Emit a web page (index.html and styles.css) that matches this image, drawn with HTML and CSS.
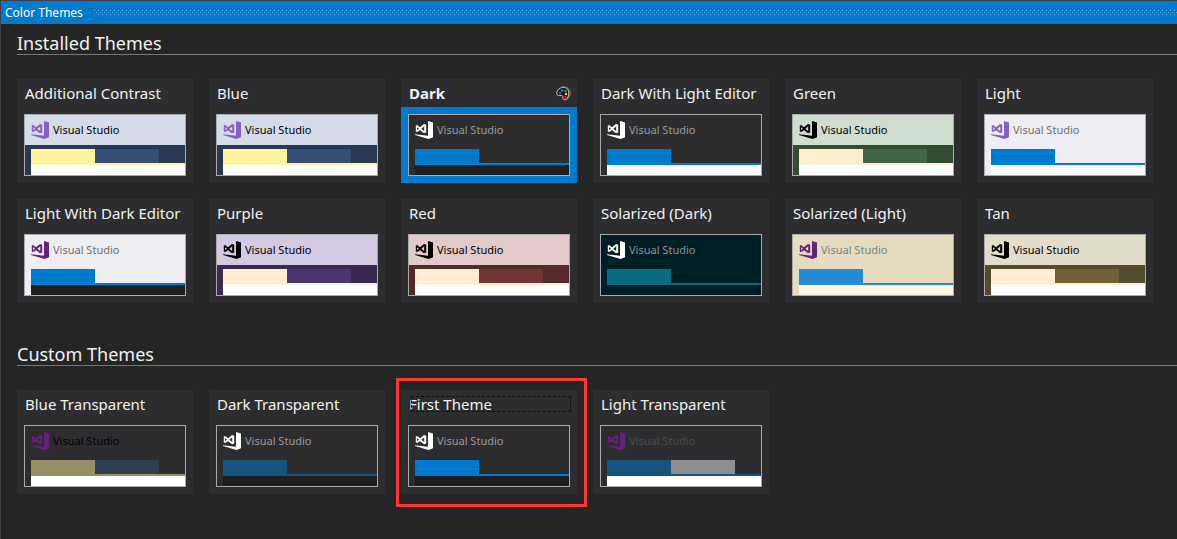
FILE: index.html
```html
<!DOCTYPE html>
<html lang="en">
<head>
  <meta charset="UTF-8" />
  <title>Color Themes</title>
  <link rel="stylesheet" href="styles.css">
</head>
<body>
  <!-- Shared icons -->
  <svg class="defs" aria-hidden="true">
    <symbol id="vs" viewBox="0 0 18 18">
      <path d="M13 0 18 1.500v14.700L13.500 18 0 14v-.8l13 1.600z"/>
      <path fill-rule="evenodd" d="M.8 4.500 2 4 5 6.200 9 3l2.200.8v7.700L9 12.300 5 9.200 2 11 .8 10.500zM2.200 6v3.200L4 7.700zM9.200 5.500 6.300 7.700 9.200 10z"/>
    </symbol>
  </svg>

  <header class="titlebar">
    <h1>Color Themes</h1>
    <span class="grip"></span>
  </header>

  <main>
    <!-- Installed -->
    <section>
      <h2>Installed Themes</h2>
      <div class="grid">
        <button class="card blue">
          <span class="name">Additional Contrast</span>
          <span class="body"><span class="preview">
            <span class="top"><svg class="logo"><use href="#vs"/></svg>Visual Studio</span>
            <span class="tabs"><i></i><i></i></span><span class="editor"></span>
          </span></span>
        </button>
        <button class="card blue">
          <span class="name">Blue</span>
          <span class="body"><span class="preview">
            <span class="top"><svg class="logo"><use href="#vs"/></svg>Visual Studio</span>
            <span class="tabs"><i></i><i></i></span><span class="editor"></span>
          </span></span>
        </button>
        <button class="card dark selected">
          <span class="name">Dark
            <svg class="palette" viewBox="0 0 15 15">
              <path d="M4 2.200C8 .2 12.400 1.500 12.700 6.500c.2 3.200-.8 5.800-2.700 7.100-2 .6-3.300-.3-3.200-2 .1-1.500-.5-2.300-1.700-2.200C3.500 9.800 1.300 10 .8 7.800.4 5.300 2 3.200 4 2.200z" fill="#1e1e1e" stroke="#c8c8c8"/>
              <path d="M6 .7c5-.3 8.300 2.500 8.200 6.500-.1 2.500-1.200 4.700-3.200 6" fill="none" stroke="#8c8c8c"/>
              <path d="M3 6h2v2H3z" fill="#3b57d0"/>
              <path d="M5 3.500h2v2H5z" fill="#1ba1e2"/>
              <path d="M8.500 4h2v2h-2z" fill="#2fae4a"/>
              <path d="M9 7h2v2H9z" fill="#ffd21f"/>
              <path d="M8 10h2.500v2.500H8z" fill="#e51400"/>
            </svg>
          </span>
          <span class="body"><span class="preview">
            <span class="top"><svg class="logo"><use href="#vs"/></svg>Visual Studio</span>
            <span class="tabs"><i></i><i></i></span><span class="editor"></span>
          </span></span>
        </button>
        <button class="card dark light-editor">
          <span class="name">Dark With Light Editor</span>
          <span class="body"><span class="preview">
            <span class="top"><svg class="logo"><use href="#vs"/></svg>Visual Studio</span>
            <span class="tabs"><i></i><i></i></span><span class="editor"></span>
          </span></span>
        </button>
        <button class="card green">
          <span class="name">Green</span>
          <span class="body"><span class="preview">
            <span class="top"><svg class="logo"><use href="#vs"/></svg>Visual Studio</span>
            <span class="tabs"><i></i><i></i></span><span class="editor"></span>
          </span></span>
        </button>
        <button class="card light">
          <span class="name">Light</span>
          <span class="body"><span class="preview">
            <span class="top"><svg class="logo"><use href="#vs"/></svg>Visual Studio</span>
            <span class="tabs"><i></i><i></i></span><span class="editor"></span>
          </span></span>
        </button>
        <button class="card light dark-editor">
          <span class="name">Light With Dark Editor</span>
          <span class="body"><span class="preview">
            <span class="top"><svg class="logo"><use href="#vs"/></svg>Visual Studio</span>
            <span class="tabs"><i></i><i></i></span><span class="editor"></span>
          </span></span>
        </button>
        <button class="card purple">
          <span class="name">Purple</span>
          <span class="body"><span class="preview">
            <span class="top"><svg class="logo"><use href="#vs"/></svg>Visual Studio</span>
            <span class="tabs"><i></i><i></i></span><span class="editor"></span>
          </span></span>
        </button>
        <button class="card red">
          <span class="name">Red</span>
          <span class="body"><span class="preview">
            <span class="top"><svg class="logo"><use href="#vs"/></svg>Visual Studio</span>
            <span class="tabs"><i></i><i></i></span><span class="editor"></span>
          </span></span>
        </button>
        <button class="card sol-dark">
          <span class="name">Solarized (Dark)</span>
          <span class="body"><span class="preview">
            <span class="top"><svg class="logo"><use href="#vs"/></svg>Visual Studio</span>
            <span class="tabs"><i></i><i></i></span><span class="editor"></span>
          </span></span>
        </button>
        <button class="card sol-light">
          <span class="name">Solarized (Light)</span>
          <span class="body"><span class="preview">
            <span class="top"><svg class="logo"><use href="#vs"/></svg>Visual Studio</span>
            <span class="tabs"><i></i><i></i></span><span class="editor"></span>
          </span></span>
        </button>
        <button class="card tan">
          <span class="name">Tan</span>
          <span class="body"><span class="preview">
            <span class="top"><svg class="logo"><use href="#vs"/></svg>Visual Studio</span>
            <span class="tabs"><i></i><i></i></span><span class="editor"></span>
          </span></span>
        </button>
      </div>
    </section>

    <!-- Custom -->
    <section>
      <h2>Custom Themes</h2>
      <div class="grid">
        <button class="card blue-trans">
          <span class="name">Blue Transparent</span>
          <span class="body"><span class="preview">
            <span class="top"><svg class="logo"><use href="#vs"/></svg>Visual Studio</span>
            <span class="tabs"><i></i><i></i></span><span class="editor"></span>
          </span></span>
        </button>
        <button class="card dark dark-trans">
          <span class="name">Dark Transparent</span>
          <span class="body"><span class="preview">
            <span class="top"><svg class="logo"><use href="#vs"/></svg>Visual Studio</span>
            <span class="tabs"><i></i><i></i></span><span class="editor"></span>
          </span></span>
        </button>
        <button class="card dark marked">
          <span class="name">First Theme</span>
          <span class="body"><span class="preview">
            <span class="top"><svg class="logo"><use href="#vs"/></svg>Visual Studio</span>
            <span class="tabs"><i></i><i></i></span><span class="editor"></span>
          </span></span>
        </button>
        <button class="card light-trans">
          <span class="name">Light Transparent</span>
          <span class="body"><span class="preview">
            <span class="top"><svg class="logo"><use href="#vs"/></svg>Visual Studio</span>
            <span class="tabs"><i></i><i></i></span><span class="editor"></span>
          </span></span>
        </button>
      </div>
    </section>
  </main>
</body>
</html>
```
FILE: styles.css
```css
*, *::before, *::after {box-sizing:border-box;}
body         {margin:0; min-height:100vh; background:#252526; color:#f1f1f1; font-family:"Noto Sans", "Open Sans", sans-serif; border-top:1px solid #3f3f46; border-left:1px solid #3f3f46;}
.defs        {display:none;}

/* Title bar */
.titlebar    {display:flex; align-items:center; gap:11px; height:23px; padding-left:4px; background:#007acc; color:#fff;}
.titlebar h1 {margin:0; font-size:12px; line-height:22px; font-weight:400;}
.grip        {flex:1; height:5px;
              background:conic-gradient(at 1px 1px, transparent 75%, #59a8de 0) 0 0 / 4px 4px,
                         conic-gradient(at 1px 1px, transparent 75%, #59a8de 0) 2px 2px / 4px 4px;}

/* Sections */
main         {padding-left:16px;}
section      {margin-bottom:32px;}
h2           {margin:0 0 24px; padding-top:8px; border-bottom:1px solid #777; font-size:18px; line-height:22px; font-weight:400;}
.grid        {display:grid; grid-template-columns:repeat(auto-fill, 176px); gap:16px;}

/* Theme card */
.card        {position:relative; display:block; padding:0; border:0; background:#2d2d30; color:#f1f1f1; font:inherit; text-align:left; cursor:pointer;}
.name        {display:flex; justify-content:space-between; align-items:center; height:28px; padding:0 6px 0 8px; font-size:15px; line-height:28px; white-space:nowrap;}
.body        {display:block; padding:7px;}
.selected .name {font-weight:700;}
.selected .body {background:#007acc;}
.palette     {width:15px; height:15px;}

.preview     {display:block; height:62px; border:1px solid #aaaaad; background:var(--frame); overflow:hidden;}
.top         {display:flex; align-items:center; gap:4px; height:30px; padding-left:6px; background:var(--top); color:var(--text); font-size:11px; line-height:16px;}
.logo        {width:18px; height:18px; fill:var(--logo);}
.tabs        {display:flex; height:20px; margin-left:6px; padding-top:4px; border-bottom:2px solid var(--tab);}
.tabs i      {width:64px; background:var(--tab);}
.tabs i + i  {background:var(--tab2);}
.editor      {display:block; height:10px; margin-left:6px; background:var(--editor);}

/* Palettes */
.blue        {--top:#d6dbe9; --frame:#293955; --text:#000; --logo:#865fc5; --tab:#fff29d; --tab2:#364e6f; --editor:#fff;}
.dark        {--top:#2d2d30; --frame:#2d2d30; --text:#999; --logo:#fff; --tab:#007acc; --tab2:transparent; --editor:#1e1e1e;}
.green       {--top:#cfddcf; --frame:#314e33; --text:#000; --logo:#000; --tab:#ffefd0; --tab2:#426545; --editor:#fff;}
.light       {--top:#eeeef2; --frame:#eeeef2; --text:#717171; --logo:#865fc5; --tab:#007acc; --tab2:transparent; --editor:#fff;}
.purple      {--top:#d3c9e0; --frame:#3b2954; --text:#000; --logo:#000; --tab:#ffefd0; --tab2:#4b366f; --editor:#fff;}
.red         {--top:#e2caca; --frame:#552929; --text:#000; --logo:#000; --tab:#ffefd0; --tab2:#6f3636; --editor:#fff;}
.sol-dark    {--top:#001e26; --frame:#001e26; --text:#839496; --logo:#fff; --tab:#0a6c80; --tab2:transparent; --editor:#001e26;}
.sol-light   {--top:#e5dbbf; --frame:#e5dbbf; --text:#74868a; --logo:#68217a; --tab:#268bd2; --tab2:transparent; --editor:#fdf6e3;}
.tan         {--top:#e2dcca; --frame:#554a29; --text:#000; --logo:#000; --tab:#ffefd0; --tab2:#6f6036; --editor:#fff;}
.blue-trans  {--top:#2d2d30; --frame:#2d2d30; --text:#000; --logo:#68217a; --tab:#968f66; --tab2:#323e50; --editor:#fff;}
.light-trans {--top:#2d2d30; --frame:#2d2d30; --text:#4b4b4d; --logo:#68217a; --tab:#16547f; --tab2:#8e8d91; --editor:#fff;}
.light-editor {--editor:#fff;}
.dark-editor {--editor:#1e1e1e; --logo:#68217a;}
.dark-trans  {--tab:#16547f;}

/* Highlight frame and focus rectangle, both over the card */
.marked::before {content:""; position:absolute; inset:-12px -10px -13px -5px; border:3px solid #ff3838;}
.marked::after  {content:""; position:absolute; top:6px; left:10px; right:6px; height:16px; border:1px dashed #111;}
```
